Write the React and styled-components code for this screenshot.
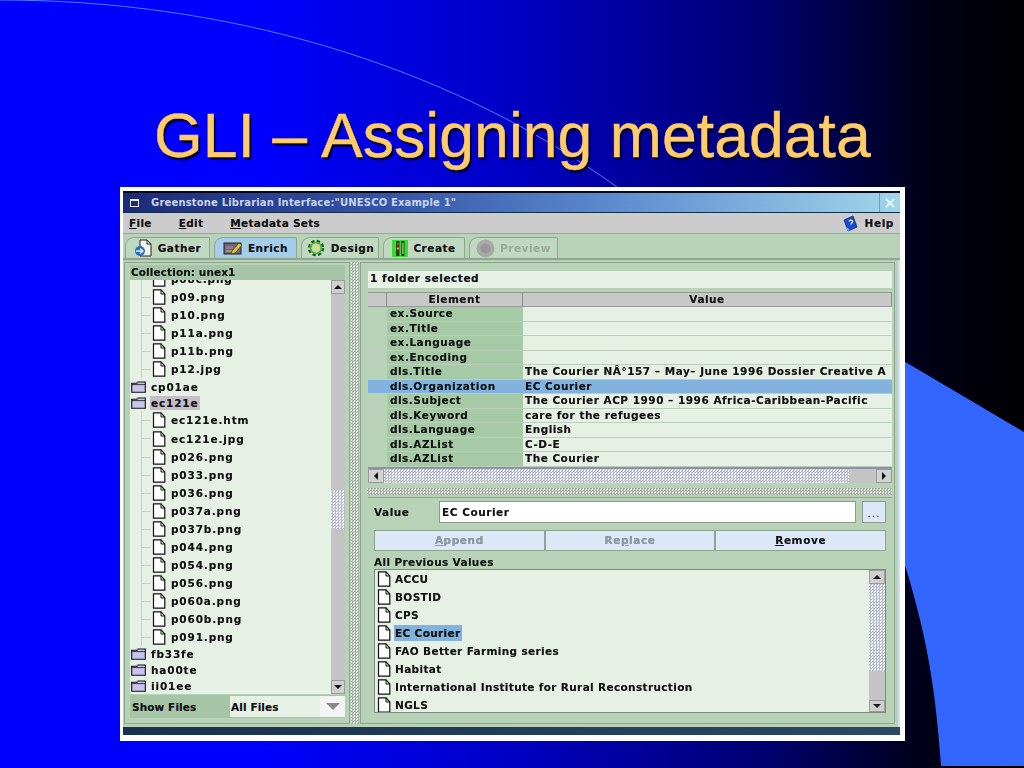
import React from "react";
import styled, { createGlobalStyle } from "styled-components";

const Global = createGlobalStyle`
  html, body { margin: 0; padding: 0; background: #000; }
  * { box-sizing: border-box; }
`;

const Slide = styled.div`
  position: relative;
  width: 1024px;
  height: 768px;
  overflow: hidden;
  padding-top: 97px;
  background: linear-gradient(90deg, #0000ff 0%, #0000ff 25%, #0000c4 50%, #000070 75%, #000018 90%, #000 100%);
`;
const Backdrop = styled.svg`
  position: absolute;
  inset: 0;
`;
const Title = styled.h1`
  position: relative;
  margin: 0 0 0 154px;
  height: 90px;
  font: 400 62.6px/76px "Liberation Sans", Arial, sans-serif;
  color: #ffcc66;
  -webkit-text-stroke: .4px #ffcc66;
  text-shadow: 2px 3px 1px #00003a;
  white-space: nowrap;
`;
const Window = styled.div`
  position: relative;
  margin-left: 120px;
  width: 785px;
  height: 554px;
  border-style: solid;
  border-color: #fff;
  border-width: 4px 5px 6px 3px;
  background: #b8d2b8;
  display: flex;
  flex-direction: column;
  font: 700 10.5px/14px "DejaVu Sans", sans-serif;
  color: #111;
  text-shadow: 0 0 .6px rgba(0,0,0,.4);
`;
const Blurred = styled.div`
  flex: 1;
  min-height: 0;
  display: flex;
  flex-direction: column;
  filter: blur(.35px);
`;
const TitleBar = styled.div`
  height: 22px;
  flex: none;
  display: flex;
  align-items: center;
  padding-left: 7px;
  border-top: 2px solid #06061c;
  border-bottom: 1px solid #10304a;
  background: linear-gradient(90deg, #1c2a78 0%, #3656a8 35%, #5f8fd0 65%, #9fd6ea 100%);
  color: #c8d6ec;
  font-size: 10px;
  letter-spacing: .17px;
  text-shadow: none;
`;
const WinIcon = styled.span`
  width: 9px;
  height: 8px;
  border: 1px solid #e8eef8;
  border-top-width: 2px;
  margin-right: 12px;
  flex: none;
`;
const CloseBox = styled.span`
  margin-left: auto;
  width: 21px;
  height: 100%;
  border-left: 1px solid #6f9fb8;
  color: #e8f6fa;
  font: 700 16px/19px "DejaVu Sans", sans-serif;
  text-align: center;
`;
const MenuBar = styled.div`
  height: 21px;
  flex: none;
  display: flex;
  align-items: center;
  padding: 0 6px 0 6px;
  background: #cccccc;
  border-bottom: 1px solid #9aa79a;
`;
const MenuItem = styled.span`
  margin-right: ${p => p.$gap}px;
  letter-spacing: .3px;
  font-weight: 600;
`;
const Help = styled.span`
  margin-left: auto;
  display: flex;
  align-items: center;
  gap: 6px;
  letter-spacing: .6px;
`;
const Key = styled.span`
  text-decoration: underline;
`;
const TabBar = styled.div`
  height: 26px;
  flex: none;
  display: flex;
  align-items: flex-end;
  padding: 0 0 0 2px;
  gap: 4px;
  background: #b8d2b8;
  border-bottom: 2px solid #8ea58e;
`;
const Tab = styled.div`
  height: 21px;
  width: ${p => p.$w}px;
  display: flex;
  align-items: center;
  justify-content: center;
  gap: 5px;
  letter-spacing: .5px;
  border: 1px solid #8ea58e;
  border-bottom: none;
  border-radius: 9px 2px 0 0;
  background: ${p => (p.$active ? "#a4cdea" : "#c0d8c0")};
  color: ${p => (p.$off ? "#98a898" : "#111")};
  text-shadow: ${p => (p.$off ? "none" : "0 0 .6px rgba(0,0,0,.4)")};
`;
const Body = styled.div`
  flex: 1;
  min-height: 0;
  display: flex;
  padding: 2px 3px 3px 1px;
  border-right: 2px solid #cfe0ee;
`;
const LeftPane = styled.div`
  width: 226px;
  flex: none;
  display: flex;
  flex-direction: column;
  padding: 2px 4px 5px 5px;
  border: 1px solid #8ea58e;
`;
const PaneTitle = styled.div`
  height: 15px;
  flex: none;
  padding-left: 1px;
  letter-spacing: .1px;
  background: #a6c4a6;
`;
const TreeBox = styled.div`
  flex: 1;
  min-height: 0;
  display: flex;
  background: #e6f0e4;
`;
const Tree = styled.div`
  flex: 1;
  min-width: 0;
  overflow: hidden;
`;
const TreeRow = styled.div`
  height: ${p => p.$h}px;
  display: flex;
  align-items: center;
  gap: 4px;
  padding-left: ${p => (p.$nested ? 22 : 1)}px;
  letter-spacing: .85px;
  font-weight: 600;
  margin-top: ${p => p.$offset || 0}px;
  white-space: nowrap;
  background: ${p => (p.$nested
    ? "linear-gradient(#c6d4c6,#c6d4c6) 11px 0/1px 100% no-repeat, linear-gradient(#c6d4c6,#c6d4c6) 11px 50%/10px 1px no-repeat"
    : "none")};
`;
const TreeLabel = styled.span`
  background: ${p => (p.$sel ? "#c6bec6" : "transparent")};
  padding: 0 1px;
`;
const VScroll = styled.div`
  width: ${p => p.$w}px;
  flex: none;
  display: flex;
  flex-direction: column;
  background: #c4c4c4;
`;
const ScrollBtn = styled.div`
  height: ${p => p.$h}px;
  flex: none;
  display: flex;
  align-items: center;
  justify-content: center;
  background: #cfcfcf;
  border: 1px solid #9a9a9a;
`;
const Track = styled.div`
  flex: ${p => p.$flex};
  min-width: 0;
  min-height: 0;
  background: ${p => (p.$thumb
    ? "#c4c4c4"
    : "repeating-conic-gradient(#b9bccb 0 25%, #eef0f4 0 50%) 0 0 / 3px 3px")};
`;
const ShowFiles = styled.div`
  height: 23px;
  flex: none;
  display: flex;
  align-items: center;
  padding-left: 2px;
  margin-top: 1px;
  background: #a6c4a6;
  letter-spacing: .1px;
`;
const Combo = styled.div`
  margin-left: auto;
  width: 115px;
  height: 21px;
  display: flex;
  align-items: center;
  padding-left: 1px;
  background: #e6f0e4;
`;
const ComboBtn = styled.div`
  margin-left: auto;
  width: 25px;
  height: 100%;
  background: #f4f4f4;
  display: flex;
  align-items: center;
  justify-content: center;
`;
const VSplit = styled.div`
  width: 8px;
  flex: none;
  margin: 0 1px;
  background: repeating-conic-gradient(#a9b4a9 0 25%, #dde6dd 0 50%) 0 0 / 3px 3px;
`;
const RightPane = styled.div`
  flex: 1;
  min-width: 0;
  display: flex;
  flex-direction: column;
  padding: 8px 2px 10px 7px;
  border: 1px solid #8ea58e;
`;
const Selected = styled.div`
  height: 17px;
  flex: none;
  padding-left: 2px;
  background: #e8f1e6;
  letter-spacing: .55px;
  font-weight: 600;
`;
const MetaTable = styled.div`
  margin-top: 4px;
  flex: none;
  border-top: 1px solid #8d9a8d;
`;
const MetaRow = styled.div`
  display: grid;
  grid-template-columns: 19px 136px 1fr;
  height: ${p => p.$h}px;
  font-weight: 600;
  letter-spacing: .5px;
`;
const Cell = styled.div`
  overflow: hidden;
  white-space: nowrap;
  padding: 0 2px 0 ${p => (p.$key ? 3 : 2)}px;
  line-height: 13px;
  border-bottom: 1px solid ${p => (p.$head ? "#9a9a9a" : "#bccfbc")};
  text-align: ${p => (p.$head ? "center" : "left")};
  border-right: 1px solid ${p => (p.$head ? "#8d8d8d" : "transparent")};
  background: ${p => {
    if (p.$sel) return "#82b3df";
    if (p.$head) return "#c8c8c8";
    if (p.$key) return "#a6c9a6";
    return p.$gutter ? "#b8d2b8" : "#e6f0e4";
  }};
`;
const HScroll = styled.div`
  height: 16px;
  flex: none;
  display: flex;
  background: #c4c4c4;
  border-top: 2px solid #9090a8;
`;
const HBtn = styled.div`
  width: 16px;
  flex: none;
  display: flex;
  align-items: center;
  justify-content: center;
  background: #d2d2d2;
  border: 1px solid #9a9a9a;
`;
const HSplit = styled.div`
  height: 7px;
  flex: none;
  margin: 5px 0 2px -1px;
  background: repeating-conic-gradient(#a3aba3 0 25%, #dce4dc 0 50%) 0 0 / 3px 3px;
`;
const ValuePanel = styled.div`
  flex: 1;
  min-height: 0;
  display: flex;
  flex-direction: column;
  padding: 3px 6px 0 6px;
  border-top: 1px solid #8ea58e;
`;
const ValueRow = styled.div`
  height: 22px;
  flex: none;
  display: flex;
  align-items: center;
  gap: 6px;
`;
const ValueLabel = styled.span`
  width: 59px;
  letter-spacing: .5px;
  font-weight: 600;
`;
const ValueInput = styled.div`
  flex: 1;
  height: 22px;
  background: #fff;
  border: 1px solid #8d9a8d;
  padding: 3px 2px;
  letter-spacing: .55px;
  font-weight: 600;
`;
const Dots = styled.div`
  width: 24px;
  height: 22px;
  flex: none;
  background: #dce8f8;
  border: 1px solid #8d9a8d;
  text-align: center;
  letter-spacing: 1px;
  line-height: 22px;
  font-weight: 400;
  color: #556;
`;
const ButtonRow = styled.div`
  margin-top: 7px;
  height: 21px;
  flex: none;
  display: grid;
  grid-template-columns: repeat(3, 1fr);
`;
const ActionBtn = styled.div`
  background: #dce8f8;
  border: 1px solid #8ea58e;
  text-align: center;
  line-height: 19px;
  letter-spacing: .6px;
  font-weight: 600;
  color: ${p => (p.$off ? "#8c9aa4" : "#111")};
`;
const ListHead = styled.div`
  height: 18px;
  flex: none;
  display: flex;
  align-items: flex-end;
  letter-spacing: .35px;
  font-weight: 600;
`;
const ListBox = styled.div`
  flex: 1;
  min-height: 0;
  display: flex;
  background: #e6f0e4;
  border: 1px solid #7d8d7d;
`;
const ListRows = styled.div`
  flex: 1;
  overflow: hidden;
  padding-left: 2px;
`;
const ListRow = styled.div`
  height: 18px;
  display: flex;
  align-items: center;
  gap: 3px;
  letter-spacing: .35px;
  font-weight: 600;
`;
const ListLabel = styled.span`
  padding: 1px 1px;
  background: ${p => (p.$sel ? "#82b3df" : "transparent")};
`;
const StatusBar = styled.div`
  height: 8px;
  flex: none;
  background: linear-gradient(90deg, #1a3050, #2a4a66);
`;

const FileIcon = () => (
  <svg width="14" height="16" viewBox="0 0 14 16" style={{ flex: "none" }}>
    <path d="M1.5 .8H9L12.8 5V15.2H1.5Z" fill="#fff" stroke="#111" strokeWidth="1.2" />
    <path d="M9 .8V5H12.8" fill="none" stroke="#111" strokeWidth="1" />
  </svg>
);
const FolderIcon = () => (
  <svg width="15" height="12" viewBox="0 0 15 12" style={{ flex: "none" }}>
    <path d="M.7 2.2H6L7 1H14.3V11.3H.7Z" fill="#c8c4ec" stroke="#111" strokeWidth="1.1" />
    <path d="M.7 3.6H14.3" stroke="#111" strokeWidth=".8" />
  </svg>
);
const Arrow = ({ dir }) => {
  const pts = { up: "0,6 4,2 8,6", down: "0,2 8,2 4,6", left: "6,0 6,8 2,4", right: "2,0 2,8 6,4" };
  return (
    <svg width="8" height="8" viewBox="0 0 8 8">
      <polygon points={pts[dir]} fill="#111" />
    </svg>
  );
};
const ComboArrow = () => (
  <svg width="14" height="7" viewBox="0 0 14 7">
    <polygon points="0,0 14,0 7,7" fill="#8a8a8a" />
  </svg>
);
const GatherIcon = () => (
  <svg width="19" height="19" viewBox="0 0 19 19">
    <path d="M6 1H13L17 5V17H6Z" fill="#f4f4f4" stroke="#222" />
    <path d="M13 1V5H17" fill="none" stroke="#222" />
    <circle cx="6" cy="12" r="5" fill="#2a6cb8" />
    <path d="M2 12H8M6 9.5L9 12L6 14.5" stroke="#d8f0ff" fill="none" strokeWidth="1.3" />
  </svg>
);
const EnrichIcon = () => (
  <svg width="20" height="16" viewBox="0 0 20 16">
    <rect x="1" y="3" width="17" height="11" fill="#6a6a70" stroke="#222" />
    <rect x="3" y="6" width="7" height="3" fill="#8a78a0" />
    <rect x="3" y="10" width="9" height="2" fill="#a89860" />
    <path d="M9 11L16 3L19 5L12 13L8 14Z" fill="#e8c030" stroke="#333" strokeWidth=".7" />
  </svg>
);
const DesignIcon = () => (
  <svg width="20" height="20" viewBox="0 0 20 20">
    <circle cx="10" cy="10" r="6.5" fill="none" stroke="#165a16" strokeWidth="3.4" strokeDasharray="3 2.1" />
    <circle cx="10" cy="10" r="5.5" fill="none" stroke="#55b040" strokeWidth="1.6" />
    <circle cx="10" cy="10" r="2" fill="#e8e040" />
  </svg>
);
const CreateIcon = () => (
  <svg width="16" height="17" viewBox="0 0 16 17">
    <rect x="0" y="0" width="16" height="17" fill="#30e030" />
    <rect x="4" y="1" width="3.5" height="15" fill="#3a3a2a" />
    <rect x="9" y="1" width="3.5" height="15" fill="#3a3a2a" />
    <rect x="4.8" y="3" width="2" height="2" fill="#e03020" />
    <rect x="4.8" y="7.5" width="2" height="2" fill="#e8c020" />
    <rect x="9.8" y="3" width="2" height="11" fill="#a09860" />
  </svg>
);
const PreviewIcon = () => (
  <svg width="19" height="19" viewBox="0 0 19 19">
    <circle cx="9.5" cy="9.5" r="9" fill="#a8a8a8" />
    <circle cx="9.5" cy="9.5" r="5" fill="#989898" />
  </svg>
);
const HelpIcon = () => (
  <svg width="17" height="17" viewBox="0 0 17 17">
    <path d="M2 5L11 1L15 12L6 16Z" fill="#1a4ad0" stroke="#0a2a80" strokeWidth=".8" />
    <path d="M3 11L6 16L8 15" fill="#48c8d8" />
    <path d="M7 6.5C8 4.5 11 5 10.5 7C10.2 8 9 8 9 9.5" fill="none" stroke="#fff" strokeWidth="1.2" />
  </svg>
);

const treeRows = [
  ["p08c.png", 1, 18, -10], ["p09.png", 1, 18], ["p10.png", 1, 18], ["p11a.png", 1, 18], ["p11b.png", 1, 18], ["p12.jpg", 1, 18],
  ["cp01ae", 0, 17], ["ec121e", 0, 16, 0, true],
  ["ec121e.htm", 1, 18], ["ec121e.jpg", 1, 19], ["p026.png", 1, 18], ["p033.png", 1, 18], ["p036.png", 1, 18], ["p037a.png", 1, 18],
  ["p037b.png", 1, 18], ["p044.png", 1, 18], ["p054.png", 1, 18], ["p056.png", 1, 18], ["p060a.png", 1, 18], ["p060b.png", 1, 18], ["p091.png", 1, 18],
  ["fb33fe", 0, 16], ["ha00te", 0, 16], ["ii01ee", 0, 16],
];
const metaRows = [
  ["ex.Source", ""], ["ex.Title", ""], ["ex.Language", ""], ["ex.Encoding", ""],
  ["dls.Title", "The Courier NÂ°157 – May– June 1996 Dossier Creative A"],
  ["dls.Organization", "EC Courier", true],
  ["dls.Subject", "The Courier ACP 1990 – 1996 Africa-Caribbean-Pacific"],
  ["dls.Keyword", "care for the refugees"], ["dls.Language", "English"], ["dls.AZList", "C-D-E"], ["dls.AZList", "The Courier"],
];
const values = ["ACCU", "BOSTID", "CPS", "EC Courier", "FAO Better Farming series", "Habitat", "International Institute for Rural Reconstruction", "NGLS"];

export default function App() {
  return (
    <Slide>
      <Global />
      <Backdrop width="1024" height="768" viewBox="0 0 1024 768">
        <path d="M0 0C220 0 440 60 617 187" fill="none" stroke="#4d7dff" strokeWidth="1" />
        <path d="M880 347L1024 432V766H941C935 680 925 620 890 520Z" fill="#3366ff" />
      </Backdrop>
      <Title>GLI – Assigning metadata</Title>
      <Window>
        <Blurred>
          <TitleBar>
            <WinIcon />
            Greenstone Librarian Interface:"UNESCO Example 1"
            <CloseBox>×</CloseBox>
          </TitleBar>
          <MenuBar>
            <MenuItem $gap={27}><Key>F</Key>ile</MenuItem>
            <MenuItem $gap={27}><Key>E</Key>dit</MenuItem>
            <MenuItem $gap={0}><Key>M</Key>etadata Sets</MenuItem>
            <Help><HelpIcon />Help</Help>
          </MenuBar>
          <TabBar>
            <Tab $w={85}><GatherIcon />Gather</Tab>
            <Tab $w={83} $active><EnrichIcon />Enrich</Tab>
            <Tab $w={78}><DesignIcon />Design</Tab>
            <Tab $w={82}><CreateIcon />Create</Tab>
            <Tab $w={89} $off><PreviewIcon />Preview</Tab>
          </TabBar>
          <Body>
            <LeftPane>
              <PaneTitle>Collection: unex1</PaneTitle>
              <TreeBox>
                <Tree>
                  {treeRows.map(([name, nested, h, offset, sel]) => (
                    <TreeRow key={name} $h={h} $offset={offset} $nested={!!nested}>
                      {nested ? <FileIcon /> : <FolderIcon />}
                      <TreeLabel $sel={sel}>{name}</TreeLabel>
                    </TreeRow>
                  ))}
                </Tree>
                <VScroll $w={14}>
                  <ScrollBtn $h={14}><Arrow dir="up" /></ScrollBtn>
                  <Track $flex={195} $thumb />
                  <Track $flex={40} />
                  <Track $flex={150} $thumb />
                  <ScrollBtn $h={14}><Arrow dir="down" /></ScrollBtn>
                </VScroll>
              </TreeBox>
              <ShowFiles>
                Show Files
                <Combo>
                  All Files
                  <ComboBtn><ComboArrow /></ComboBtn>
                </Combo>
              </ShowFiles>
            </LeftPane>
            <VSplit />
            <RightPane>
              <Selected>1 folder selected</Selected>
              <MetaTable>
                <MetaRow $h={14}>
                  <Cell $head />
                  <Cell $head>Element</Cell>
                  <Cell $head>Value</Cell>
                </MetaRow>
                {metaRows.map(([k, v, sel], i) => (
                  <MetaRow key={i} $h={14.5}>
                    <Cell $gutter $sel={sel} />
                    <Cell $key $sel={sel}>{k}</Cell>
                    <Cell $sel={sel}>{v}</Cell>
                  </MetaRow>
                ))}
              </MetaTable>
              <HScroll>
                <HBtn><Arrow dir="left" /></HBtn>
                <Track $flex={464} />
                <Track $flex={27} $thumb />
                <HBtn><Arrow dir="right" /></HBtn>
              </HScroll>
              <HSplit />
              <ValuePanel>
                <ValueRow>
                  <ValueLabel>Value</ValueLabel>
                  <ValueInput>EC Courier</ValueInput>
                  <Dots>...</Dots>
                </ValueRow>
                <ButtonRow>
                  <ActionBtn $off><Key>A</Key>ppend</ActionBtn>
                  <ActionBtn $off>Re<Key>p</Key>lace</ActionBtn>
                  <ActionBtn><Key>R</Key>emove</ActionBtn>
                </ButtonRow>
                <ListHead>All Previous Values</ListHead>
                <ListBox>
                  <ListRows>
                    {values.map((v) => (
                      <ListRow key={v}>
                        <FileIcon />
                        <ListLabel $sel={v === "EC Courier"}>{v}</ListLabel>
                      </ListRow>
                    ))}
                  </ListRows>
                  <VScroll $w={16}>
                    <ScrollBtn $h={14}><Arrow dir="up" /></ScrollBtn>
                    <Track $flex={90} />
                    <Track $flex={30} $thumb />
                    <ScrollBtn $h={12}><Arrow dir="down" /></ScrollBtn>
                  </VScroll>
                </ListBox>
              </ValuePanel>
            </RightPane>
          </Body>
          <StatusBar />
        </Blurred>
      </Window>
    </Slide>
  );
}
